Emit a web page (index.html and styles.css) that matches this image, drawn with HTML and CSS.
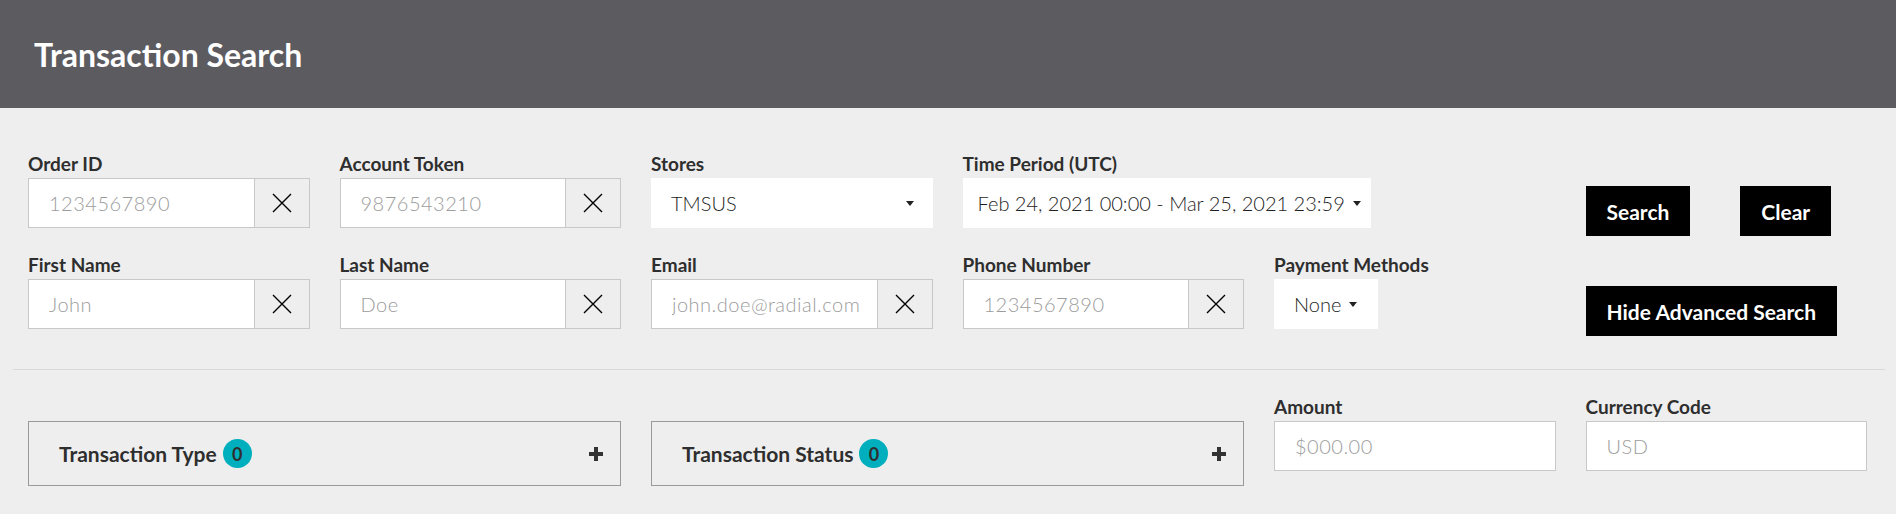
FILE: index.html
```html
<!DOCTYPE html>
<html lang="en">
<head>
  <meta charset="UTF-8">
  <title>Transaction Search</title>
  <link rel="stylesheet" href="styles.css">
</head>
<body>

<header class="page-header">
  <h1>Transaction Search</h1>
</header>

<main class="search">
  <section class="basic">
    <div class="field">
      <label>Order ID</label>
      <div class="input-group">
        <input type="text" placeholder="1234567890">
        <button class="clear-btn" type="button">
          <svg width="20" height="20" viewBox="0 0 20 20"><path d="M1 1L19 19M19 1L1 19" stroke="#000" stroke-width="1.4" fill="none"/></svg>
        </button>
      </div>
    </div>

    <div class="field">
      <label>Account Token</label>
      <div class="input-group">
        <input type="text" placeholder="9876543210">
        <button class="clear-btn" type="button">
          <svg width="20" height="20" viewBox="0 0 20 20"><path d="M1 1L19 19M19 1L1 19" stroke="#000" stroke-width="1.4" fill="none"/></svg>
        </button>
      </div>
    </div>

    <div class="field">
      <label>Stores</label>
      <div class="dropdown wide">
        <span>TMSUS</span>
        <span class="caret"></span>
      </div>
    </div>

    <div class="field span-2">
      <label>Time Period (UTC)</label>
      <div class="dropdown period">
        <span>Feb 24, 2021 00:00 - Mar 25, 2021 23:59</span>
        <span class="caret"></span>
      </div>
    </div>

    <div class="actions">
      <div class="action-row">
        <button class="btn" type="button">Search</button>
        <button class="btn" type="button">Clear</button>
      </div>
      <div class="action-row">
        <button class="btn" type="button">Hide Advanced Search</button>
      </div>
    </div>

    <div class="field">
      <label>First Name</label>
      <div class="input-group">
        <input type="text" placeholder="John">
        <button class="clear-btn" type="button">
          <svg width="20" height="20" viewBox="0 0 20 20"><path d="M1 1L19 19M19 1L1 19" stroke="#000" stroke-width="1.4" fill="none"/></svg>
        </button>
      </div>
    </div>

    <div class="field">
      <label>Last Name</label>
      <div class="input-group">
        <input type="text" placeholder="Doe">
        <button class="clear-btn" type="button">
          <svg width="20" height="20" viewBox="0 0 20 20"><path d="M1 1L19 19M19 1L1 19" stroke="#000" stroke-width="1.4" fill="none"/></svg>
        </button>
      </div>
    </div>

    <div class="field">
      <label>Email</label>
      <div class="input-group">
        <input type="text" placeholder="john.doe@radial.com">
        <button class="clear-btn" type="button">
          <svg width="20" height="20" viewBox="0 0 20 20"><path d="M1 1L19 19M19 1L1 19" stroke="#000" stroke-width="1.4" fill="none"/></svg>
        </button>
      </div>
    </div>

    <div class="field">
      <label>Phone Number</label>
      <div class="input-group">
        <input type="text" placeholder="1234567890">
        <button class="clear-btn" type="button">
          <svg width="20" height="20" viewBox="0 0 20 20"><path d="M1 1L19 19M19 1L1 19" stroke="#000" stroke-width="1.4" fill="none"/></svg>
        </button>
      </div>
    </div>

    <div class="field">
      <label>Payment Methods</label>
      <div class="dropdown compact">
        <span>None</span>
        <span class="caret"></span>
      </div>
    </div>
  </section>

  <hr class="divider">

  <section class="advanced">
    <div class="collapse span-2">
      <span class="collapse-title">Transaction Type <span class="badge">0</span></span>
      <svg class="plus" width="16" height="16" viewBox="0 0 16 16"><path d="M6 1h4v5h5v4h-5v5H6v-5H1V6h5z" fill="#333"/></svg>
    </div>

    <div class="collapse span-2">
      <span class="collapse-title">Transaction Status <span class="badge">0</span></span>
      <svg class="plus" width="16" height="16" viewBox="0 0 16 16"><path d="M6 1h4v5h5v4h-5v5H6v-5H1V6h5z" fill="#333"/></svg>
    </div>

    <div class="field">
      <label>Amount</label>
      <div class="input-group">
        <input type="text" placeholder="$000.00">
      </div>
    </div>

    <div class="field">
      <label>Currency Code</label>
      <div class="input-group">
        <input type="text" placeholder="USD">
      </div>
    </div>
  </section>
</main>

</body>
</html>
```

FILE: styles.css
```css
body {
  margin: 0;
  background: #eeeeee;
  font-family: 'Lato', 'Liberation Sans', sans-serif;
  color: #2e2e2e;
}

.page-header {
  background: #5c5b60;
  height: 108px;
  display: flex;
  align-items: center;
  padding-left: 34px;
}

.page-header h1 {
  margin: 0;
  color: #fff;
  font-size: 32px;
  font-weight: 700;
}

.search {
  padding: 0 11px 0 13px;
}

.basic,
.advanced {
  display: grid;
  grid-template-columns: repeat(6, 281.5px);
  column-gap: 30px;
  padding: 0 15px;
}

.basic {
  padding-top: 46px;
  padding-bottom: 40px;
  row-gap: 27px;
}

.advanced {
  padding-top: 27px;
  padding-bottom: 28px;
}

.span-2 {
  grid-column: span 2;
}

.field label {
  display: block;
  font-size: 19px;
  line-height: 20px;
  font-weight: 700;
  margin-bottom: 4px;
}

.input-group {
  display: flex;
  height: 50px;
  box-sizing: border-box;
  border: 1px solid #c8c8c8;
  background: #fff;
}

.input-group input {
  flex: 1;
  min-width: 0;
  border: none;
  outline: none;
  padding: 0 0 0 20px;
  font-family: inherit;
  font-size: 20px;
  font-weight: 300;
  letter-spacing: 0.5px;
  color: #333;
  background: #fff;
}

.input-group input::placeholder {
  color: #9c9c9c;
}

.clear-btn {
  width: 55px;
  flex: none;
  border: none;
  border-left: 1px solid #c8c8c8;
  background: #eeeeee;
  padding: 0;
  display: flex;
  align-items: center;
  justify-content: center;
}

.dropdown {
  display: inline-flex;
  align-items: center;
  height: 50px;
  background: #fff;
  font-size: 20px;
  font-weight: 300;
  color: #1e1e1e;
  box-sizing: border-box;
}

.dropdown.wide {
  display: flex;
  justify-content: space-between;
  padding: 0 19px 0 20px;
}

.dropdown.period {
  padding: 0 10px 0 15px;
  gap: 8px;
}

.dropdown.compact {
  padding: 0 21px 0 20px;
  gap: 8px;
}

.caret {
  width: 0;
  height: 0;
  border-left: 4px solid transparent;
  border-right: 4px solid transparent;
  border-top: 5px solid #222;
}

.actions {
  grid-column: 6;
  grid-row: 1 / 3;
  display: flex;
  flex-direction: column;
  gap: 50px;
  padding-top: 32px;
  margin-bottom: -7px;
}

.action-row {
  display: flex;
  gap: 50px;
}

.btn {
  height: 50px;
  padding: 0 21px;
  border: none;
  background: #000;
  color: #fff;
  font-family: inherit;
  font-size: 21px;
  font-weight: 700;
}

.divider {
  margin: 0;
  border: none;
  border-top: 1px solid #d9d9d9;
}

.collapse {
  margin-top: 24px;
  height: 65px;
  box-sizing: border-box;
  border: 1px solid #999;
  display: flex;
  align-items: center;
  justify-content: space-between;
  padding: 0 16px 0 30px;
}

.collapse-title {
  display: flex;
  align-items: center;
  gap: 6px;
  font-size: 21px;
  font-weight: 700;
}

.badge {
  width: 29px;
  height: 29px;
  border-radius: 50%;
  background: #00afbe;
  color: #2e2e2e;
  font-size: 18px;
  font-weight: 700;
  display: flex;
  align-items: center;
  justify-content: center;
}
```
